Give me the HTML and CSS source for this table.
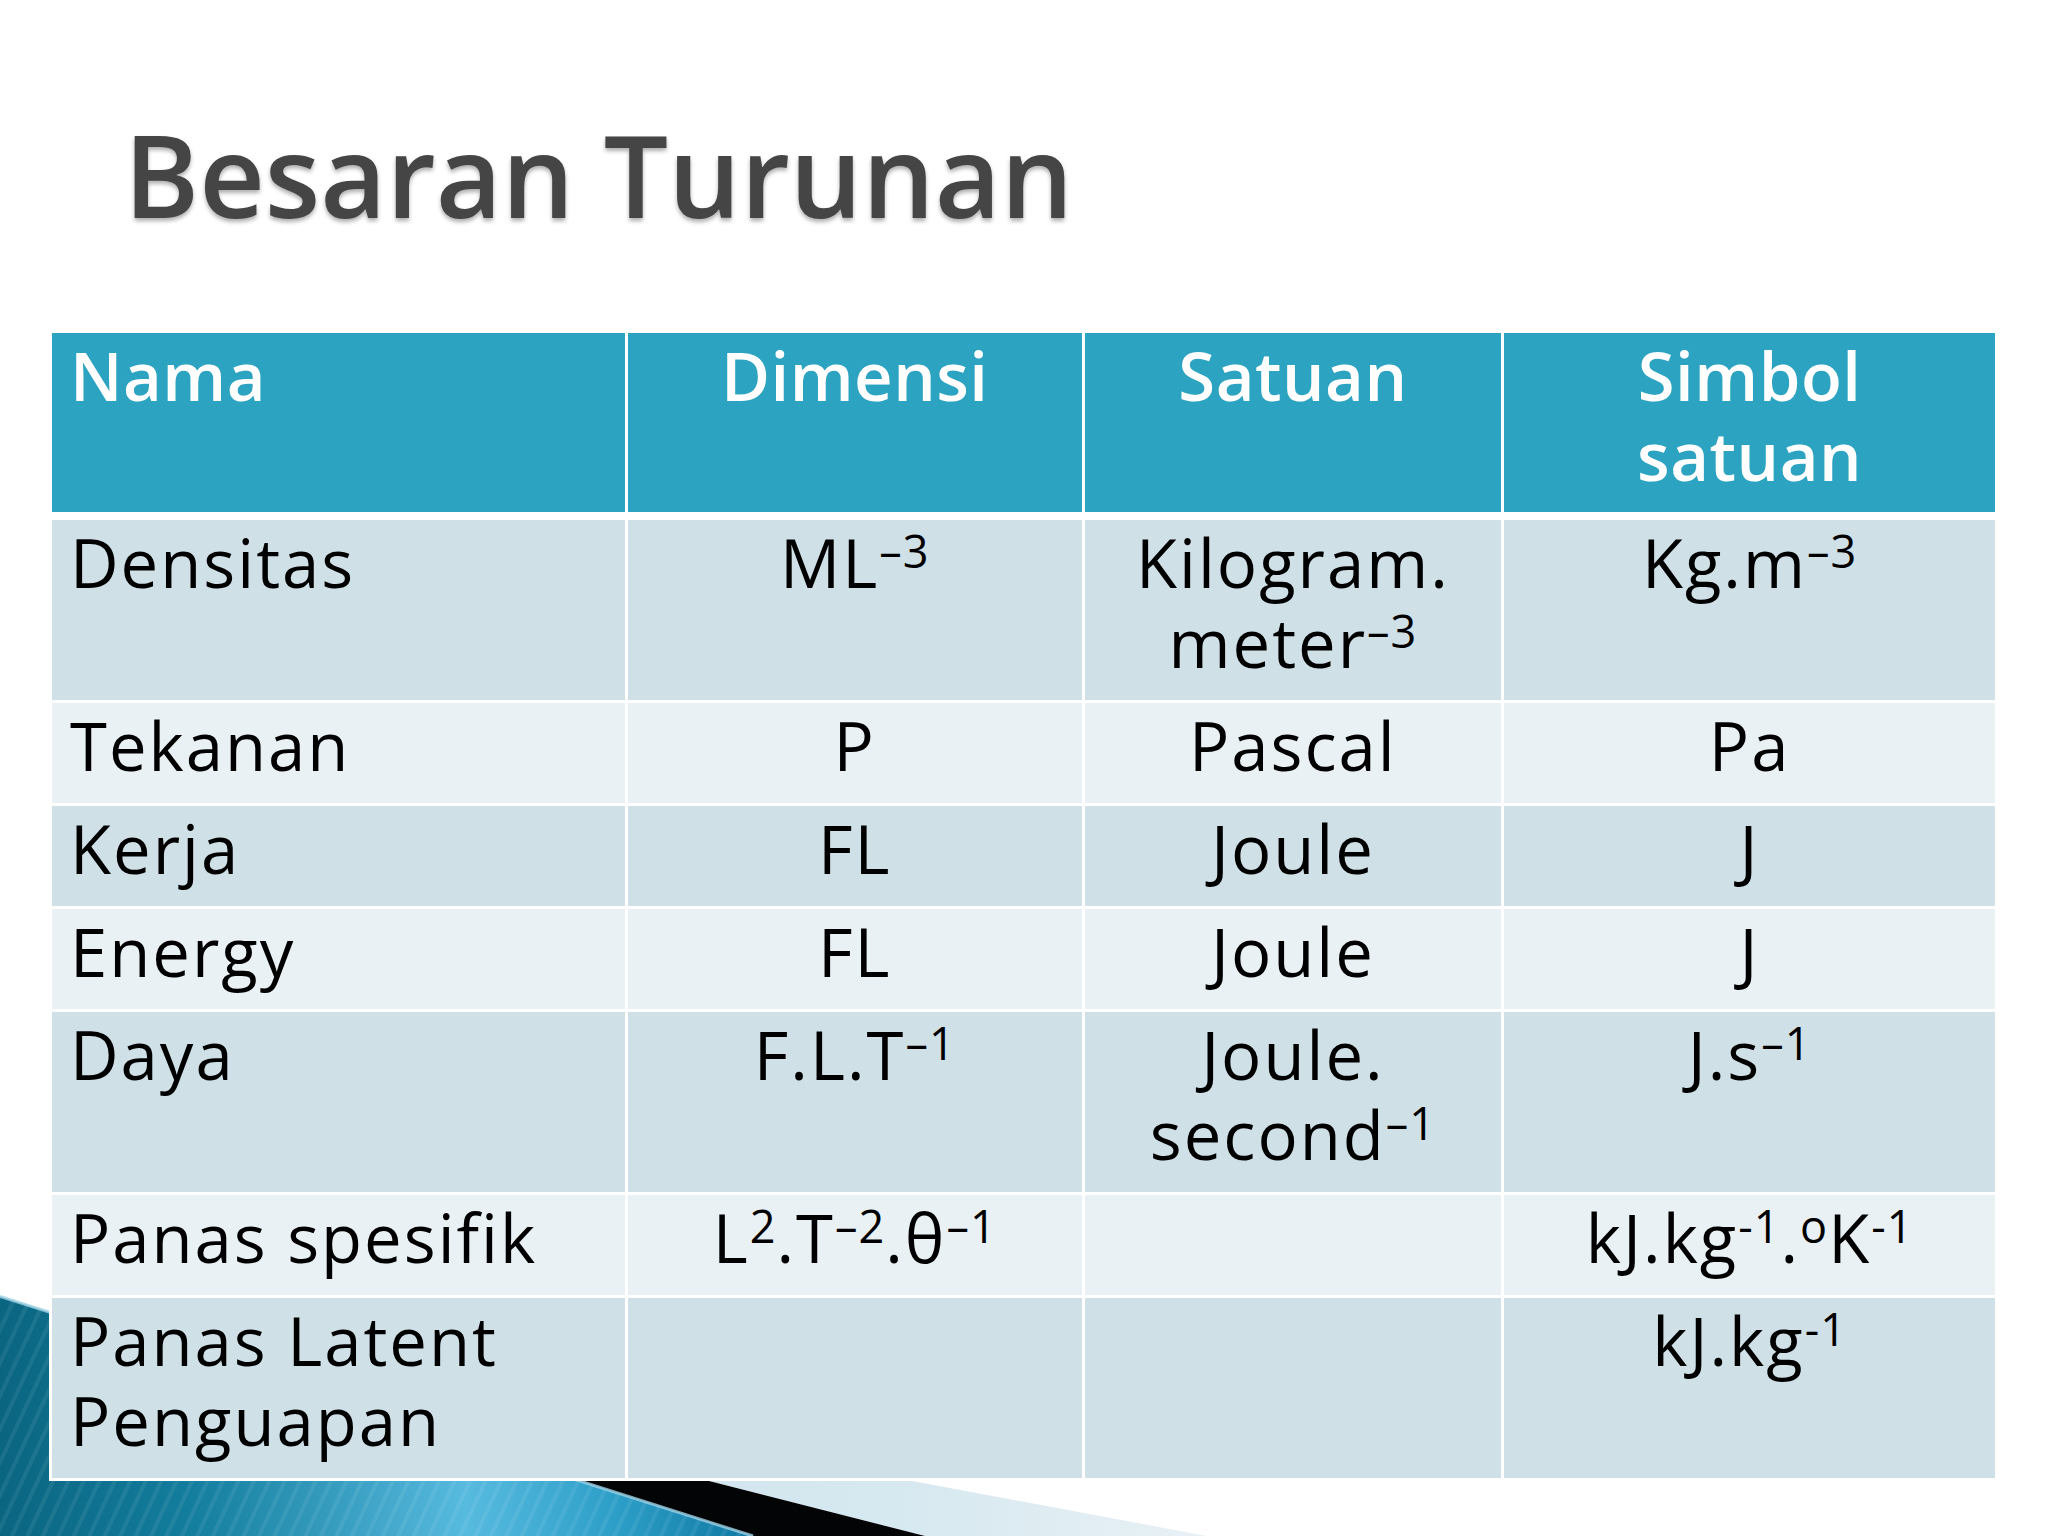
FILE: index.html
```html
<!DOCTYPE html>
<html lang="id">
<head>
<meta charset="utf-8">
<title>Besaran Turunan</title>
<link rel="stylesheet" href="styles.css">
</head>
<body>
<div class="slide">
  <svg class="deco" width="2048" height="1536" viewBox="0 0 2048 1536" aria-hidden="true">
    <defs>
      <linearGradient id="tealGrad" x1="0" y1="0" x2="753" y2="0" gradientUnits="userSpaceOnUse">
        <stop offset="0" stop-color="#0a6581"/>
        <stop offset="0.25" stop-color="#137d9d"/>
        <stop offset="0.62" stop-color="#57badf"/>
        <stop offset="0.82" stop-color="#2c9ec7"/>
        <stop offset="1" stop-color="#0f78a2"/>
      </linearGradient>
      <linearGradient id="paleGrad" x1="149" y1="0" x2="1207" y2="0" gradientUnits="userSpaceOnUse">
        <stop offset="0" stop-color="#c9e0eb"/>
        <stop offset="0.7" stop-color="#d6e8f0"/>
        <stop offset="1" stop-color="#e8f1f5"/>
      </linearGradient>
      <pattern id="stripes" width="14" height="14" patternUnits="userSpaceOnUse" patternTransform="rotate(25)">
        <rect x="0" y="0" width="4" height="14" fill="#ffffff" fill-opacity="0.07"/>
      </pattern>
    </defs>
    <polygon points="0,1296.5 753,1536 0,1536" fill="url(#tealGrad)"/>
    <polygon points="0,1296.5 753,1536 0,1536" fill="url(#stripes)"/>
    <polygon points="149,1338.5 925,1536 1207,1536" fill="url(#paleGrad)"/>
    <polygon points="60,1315.7 753,1536 925,1536" fill="#030405"/>
    <line x1="0" y1="1296.5" x2="753" y2="1536" stroke="#9ed2e6" stroke-width="3" stroke-opacity="0.8"/>
  </svg>

  <main class="content">
    <h1 class="title">Besaran Turunan</h1>
    <table class="grid">
      <thead>
        <tr>
          <th class="left w1">Nama</th>
          <th class="w2">Dimensi</th>
          <th class="w3">Satuan</th>
          <th class="w4">Simbol<br>satuan</th>
        </tr>
      </thead>
      <tbody>
        <tr class="dark">
          <td class="left">Densitas</td>
          <td>ML<sup>–3</sup></td>
          <td>Kilogram.<br>meter<sup>–3</sup></td>
          <td>Kg.m<sup>–3</sup></td>
        </tr>
        <tr class="light">
          <td class="left">Tekanan</td>
          <td>P</td>
          <td>Pascal</td>
          <td>Pa</td>
        </tr>
        <tr class="dark">
          <td class="left">Kerja</td>
          <td>FL</td>
          <td>Joule</td>
          <td>J</td>
        </tr>
        <tr class="light">
          <td class="left">Energy</td>
          <td>FL</td>
          <td>Joule</td>
          <td>J</td>
        </tr>
        <tr class="dark">
          <td class="left">Daya</td>
          <td>F.L.T<sup>–1</sup></td>
          <td>Joule.<br>second<sup>–1</sup></td>
          <td>J.s<sup>–1</sup></td>
        </tr>
        <tr class="light">
          <td class="left">Panas spesifik</td>
          <td>L<sup>2</sup>.T<sup>–2</sup>.θ<sup>–1</sup></td>
          <td></td>
          <td>kJ.kg<sup>-1</sup>.<sup>o</sup>K<sup>-1</sup></td>
        </tr>
        <tr class="dark last">
          <td class="left">Panas Latent<br>Penguapan</td>
          <td></td>
          <td></td>
          <td>kJ.kg<sup>-1</sup></td>
        </tr>
      </tbody>
    </table>
  </main>
</div>
</body>
</html>
```

FILE: styles.css
```css
html, body {
  margin: 0;
  padding: 0;
  background: #ffffff;
}

.slide {
  position: relative;
  width: 2048px;
  height: 1536px;
  overflow: hidden;
  background: #ffffff;
  font-family: "Open Sans", "Noto Sans", "DejaVu Sans", sans-serif;
}

.deco {
  position: absolute;
  left: 0;
  top: 0;
  z-index: 0;
  pointer-events: none;
}

.content {
  position: relative;
  z-index: 1;
  padding: 104px 0 0 49px;
}

.title {
  margin: 0 0 87px 75px;
  font-size: 114px;
  line-height: 139px;
  font-weight: 600;
  color: #454545;
  letter-spacing: 0;
  text-shadow: 0 3px 4px rgba(0, 0, 0, 0.32), 0 -1px 0 rgba(255, 255, 255, 0.4);
}

.grid {
  border-collapse: separate;
  border-spacing: 0;
  table-layout: fixed;
  width: 1949px;
  border: 3px solid #ffffff;
  background: #ffffff;
  font-size: 67px;
  line-height: 80px;
  color: #000000;
}

.grid th,
.grid td {
  box-sizing: border-box;
  padding: 2px 10px 18px;
  vertical-align: top;
  text-align: center;
  border-right: 3px solid #ffffff;
  border-bottom: 3px solid #ffffff;
  white-space: nowrap;
}

.grid td {
  letter-spacing: 2px;
}

.grid th:last-child,
.grid td:last-child {
  border-right: 0;
}

.grid th {
  background: #2ba3c1;
  color: #ffffff;
  font-weight: 600;
  letter-spacing: 0.5px;
  padding-bottom: 17px;
  border-bottom-width: 8px;
}

.grid .left {
  text-align: left;
  padding-left: 18px;
}

.w1 { width: 575px; }
.w2 { width: 456px; }
.w3 { width: 419px; }
.w4 { width: 490px; }

.dark td {
  background: #cfe0e7;
}

.light td {
  background: #e9f1f5;
}

.last td {
  border-bottom: 0;
}

.grid sup {
  font-size: 45px;
  line-height: 0;
  letter-spacing: 1px;
  vertical-align: 20px;
}
```
